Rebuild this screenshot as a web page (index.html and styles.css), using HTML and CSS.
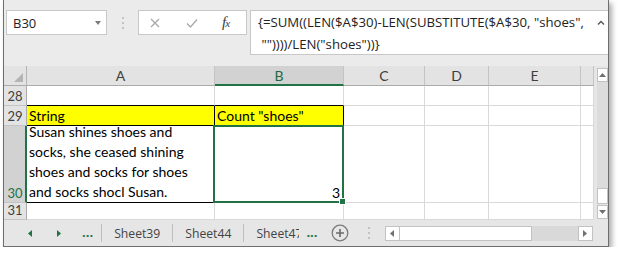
FILE: index.html
```html
<!DOCTYPE html>
<html>
<head>
<meta charset="utf-8">
<link rel="stylesheet" href="styles.css">
</head>
<body>
<div class="window">
  <div class="fbar">
    <div class="namebox"><span class="nb-text">B30</span><span class="dd"></span></div>
    <div class="grip"></div>
    <div class="fnbox">
      <svg class="ic-x" width="10" height="10" viewBox="0 0 10 10"><path d="M1 1L9 9M9 1L1 9" stroke="#a8a8a8" stroke-width="1.3" fill="none"/></svg>
      <svg class="ic-ok" width="12" height="10" viewBox="0 0 12 10"><path d="M1 5.5L4.5 9L11 1.5" stroke="#a8a8a8" stroke-width="1.3" fill="none"/></svg>
      <span class="fx"><i>f</i><i class="fx-x">x</i></span>
    </div>
    <div class="formula">
      <div class="ftext">
        <div class="fline">{=SUM((LEN($A$30)-LEN(SUBSTITUTE($A$30, "shoes",</div>
        <div class="fline"> ""))))/LEN("shoes"))}</div>
      </div>
      <svg class="caret" width="8" height="5" viewBox="0 0 8 5"><path d="M1 4.5L4 1.5L7 4.5" stroke="#555" stroke-width="1.4" fill="none"/></svg>
    </div>
  </div>

  <div class="body">
    <div class="grid">
      <div class="corner"><span class="tri"></span></div>
      <div class="ch">A</div>
      <div class="ch ch-sel">B</div>
      <div class="ch">C</div>
      <div class="ch">D</div>
      <div class="ch">E</div>
      <div class="ch"></div>

      <div class="rh">28</div>
      <div class="c c-topb"></div>
      <div class="c c-topb"></div>
      <div class="c"></div>
      <div class="c"></div>
      <div class="c"></div>
      <div class="c"></div>

      <div class="rh">29</div>
      <div class="c c-yel">String</div>
      <div class="c c-yel">Count "shoes"</div>
      <div class="c"></div>
      <div class="c"></div>
      <div class="c"></div>
      <div class="c"></div>

      <div class="rh rh-sel">30</div>
      <div class="c c-wrap">Susan shines shoes and socks, she ceased shining shoes and socks for shoes and socks shocl Susan.</div>
      <div class="c c-active"><span class="num">3</span><span class="sel"></span><span class="handle"></span></div>
      <div class="c"></div>
      <div class="c"></div>
      <div class="c"></div>
      <div class="c"></div>

      <div class="rh">31</div>
      <div class="c"></div>
      <div class="c"></div>
      <div class="c"></div>
      <div class="c"></div>
      <div class="c"></div>
      <div class="c"></div>
    </div>
    <div class="vscroll">
      <div class="vbtn"><svg width="7" height="4" viewBox="0 0 7 4"><path d="M0 4L3.5 0L7 4Z" fill="#6f6f6f"/></svg></div>
      <div class="vtrack"></div>
      <div class="vthumb"></div>
      <div class="vbtn"><svg width="7" height="4" viewBox="0 0 7 4"><path d="M0 0L3.5 4L7 0Z" fill="#6f6f6f"/></svg></div>
    </div>
  </div>

  <div class="tabs">
    <svg class="t-left" width="4" height="7" viewBox="0 0 4 7"><path d="M4 0L0 3.5L4 7Z" fill="#217346"/></svg>
    <svg class="t-right" width="4" height="7" viewBox="0 0 4 7"><path d="M0 0L4 3.5L0 7Z" fill="#217346"/></svg>
    <span class="t-more">...</span>
    <span class="t-sep"></span>
    <span class="tab">Sheet39</span>
    <span class="t-sep"></span>
    <span class="tab">Sheet44</span>
    <span class="t-sep"></span>
    <span class="tab tab-clip">Sheet47</span>
    <span class="t-more t-more2">...</span>
    <svg class="t-add" width="18" height="18" viewBox="0 0 18 18"><circle cx="9" cy="9" r="7.8" stroke="#7a7a7a" stroke-width="1.3" fill="none"/><path d="M9 5V13M5 9H13" stroke="#6a6a6a" stroke-width="1.6"/></svg>
    <span class="t-grip"></span>
    <div class="hscroll">
      <div class="hbtn"><svg width="4" height="7" viewBox="0 0 4 7"><path d="M4 0L0 3.5L4 7Z" fill="#6f6f6f"/></svg></div>
      <div class="hthumb"></div>
      <div class="htrack"></div>
      <div class="hbtn"><svg width="4" height="7" viewBox="0 0 4 7"><path d="M0 0L4 3.5L0 7Z" fill="#6f6f6f"/></svg></div>
    </div>
  </div>
</div>
</body>
</html>
```
FILE: styles.css
```css
html, body {
  margin: 0;
  padding: 0;
  background: #ffffff;
}

.window {
  margin-left: 3px;
  width: 606px;
  height: 247px;
  box-sizing: border-box;
  border: 1px solid #6e6e6e;
  border-top: none;
  background: #e6e6e6;
  box-shadow: 3px 3px 5px rgba(0, 0, 0, 0.32);
  display: flex;
  flex-direction: column;
  overflow: hidden;
}

/* ---------- formula bar ---------- */
.fbar {
  height: 66px;
  flex: none;
  box-sizing: border-box;
  padding: 10px 0 0 2px;
  display: flex;
  align-items: flex-start;
  background: #ebebeb;
}

.namebox {
  width: 101px;
  height: 25px;
  box-sizing: border-box;
  border: 1px solid #c8c8c8;
  background: #fff;
  display: flex;
  align-items: center;
  padding-left: 6px;
  font: 13px "Open Sans", sans-serif;
  color: #222;
}

.dd {
  margin-left: auto;
  margin-right: 5px;
  width: 0;
  height: 0;
  border-left: 3.5px solid transparent;
  border-right: 3.5px solid transparent;
  border-top: 4px solid #7a7a7a;
}

.grip {
  margin: 7px 0 0 15px;
  width: 2px;
  height: 12px;
  background-image: linear-gradient(#c2c2c2 2px, transparent 2px);
  background-size: 2px 5px;
}

.fnbox {
  margin-left: 14px;
  width: 109px;
  height: 25px;
  box-sizing: border-box;
  border: 1px solid #c8c8c8;
  background: #fff;
  display: flex;
  align-items: center;
  padding-left: 11px;
}

.ic-ok {
  margin-left: 26px;
}

.fx {
  margin-left: 24px;
  font: italic 15px "Liberation Serif", serif;
  color: #3c3c3c;
  letter-spacing: -1px;
}

.fx-x {
  font-size: 11px;
}

.formula {
  margin-left: 3px;
  flex: 1;
  height: 45px;
  box-sizing: border-box;
  border: 1px solid #c8c8c8;
  border-right: none;
  background: #fff;
  display: flex;
  align-items: flex-start;
  padding-left: 7px;
}

.ftext {
  flex: 1;
  font: 13.2px "Open Sans", sans-serif;
  line-height: 22px;
  color: #222;
}

.fline {
  white-space: pre;
}

.caret {
  margin: 9px 3px 0 0;
}

/* ---------- grid ---------- */
.body {
  height: 154px;
  flex: none;
  display: flex;
}

.grid {
  display: grid;
  grid-template-columns: 23px 188px 129px 81px 64px 92px 13px;
  grid-template-rows: 20px 20px 20px 77px 17px;
  background: #fff;
}

.grid > div {
  box-sizing: border-box;
  border-right: 1px solid #d9d9d9;
  border-bottom: 1px solid #d9d9d9;
  min-width: 0;
}

.grid > .corner {
  background: #e3e3e3;
  border-right: 1px solid #b5b5b5;
  border-bottom: 1px solid #ababab;
  display: flex;
  align-items: flex-end;
  justify-content: flex-end;
  padding: 0 3px 3px 0;
}

.tri {
  width: 0;
  height: 0;
  border-left: 9px solid transparent;
  border-bottom: 9px solid #b4b4b4;
}

.grid > .ch {
  background: #e3e3e3;
  border-right: 1px solid #c4c4c4;
  border-bottom: 1px solid #ababab;
  display: flex;
  align-items: center;
  justify-content: center;
  font: 14px "Lato", sans-serif;
  color: #404040;
}

.grid > .ch-sel {
  background: #d2d2d2;
  border-bottom: 2px solid #217346;
  color: #1d6a3f;
}

.grid > .rh {
  background: #e3e3e3;
  border-right: 1px solid #ababab;
  border-bottom: 1px solid #c4c4c4;
  display: flex;
  align-items: flex-end;
  justify-content: center;
  font: 13px "Lato", sans-serif;
  line-height: 17px;
  color: #404040;
}

.grid > .rh-sel {
  background: #d2d2d2;
  border-right: 2px solid #217346;
  color: #217346;
  padding-left: 1px;
}

.grid > .c {
  font: 14px "Lato", sans-serif;
  color: #000;
  line-height: 18px;
  padding: 0 2px 0 2px;
  display: flex;
  align-items: flex-end;
  white-space: nowrap;
}

.grid > .c-topb {
  border-bottom: 1px solid #000;
}

.grid > .c-yel {
  background: #ffff00;
  border-right: 1px solid #000;
  border-bottom: 1px solid #000;
}

.grid > .c-wrap {
  white-space: normal;
  line-height: 20px;
  border-right: 1px solid #000;
  border-bottom: 1px solid #000;
  padding: 0 8px 0 2px;
  display: flex;
  align-items: flex-end;
}

.grid > .c-active {
  position: relative;
  justify-content: flex-end;
  padding-right: 3px;
  overflow: visible;
  z-index: 2;
}

.sel {
  position: absolute;
  left: -2px;
  top: -1px;
  right: -1px;
  bottom: -1px;
  border: 2px solid #217346;
  pointer-events: none;
}

.handle {
  position: absolute;
  right: -2px;
  bottom: -2px;
  width: 5px;
  height: 5px;
  background: #217346;
  box-shadow: 0 0 0 1px #fff;
}

/* vertical scrollbar */
.vscroll {
  width: 14px;
  box-sizing: border-box;
  padding: 2px 0 1px 3px;
  display: flex;
  flex-direction: column;
  background: #e6e6e6;
}

.vbtn {
  width: 11px;
  height: 14px;
  box-sizing: border-box;
  border: 1px solid #c2c2c2;
  background: #fff;
  display: flex;
  align-items: center;
  justify-content: center;
  flex: none;
}

.vtrack {
  flex: 1;
  background: #dcdcdc;
}

.vthumb {
  height: 16px;
  flex: none;
  box-sizing: border-box;
  border: 1px solid #c2c2c2;
  background: #fff;
  margin-bottom: 1px;
}

/* ---------- sheet tabs ---------- */
.tabs {
  flex: 1;
  display: flex;
  align-items: center;
  background: #e6e6e6;
  font: 12.2px "Open Sans", sans-serif;
  color: #444;
}

.t-left {
  margin-left: 24px;
}

.t-right {
  margin-left: 25px;
}

.t-more {
  margin-left: 21px;
  font: bold 13px "Open Sans", sans-serif;
  color: #217346;
  position: relative;
  top: -1px;
}

.t-sep {
  width: 1px;
  height: 18px;
  background: #bdbdbd;
  margin-left: 8px;
}

.tab {
  padding: 0 12px;
  white-space: nowrap;
}

.tab + .t-sep {
  margin-left: 0;
}

.tab-clip {
  width: 43px;
  padding-right: 0;
  overflow: hidden;
  flex: none;
}

.t-more2 {
  margin-left: 7px;
}

.t-add {
  margin-left: 13px;
  flex: none;
}

.t-grip {
  margin-left: 19px;
  width: 2px;
  height: 12px;
  background-image: linear-gradient(#c2c2c2 2px, transparent 2px);
  background-size: 2px 5px;
}

.hscroll {
  margin-left: 15px;
  width: 208px;
  height: 15px;
  display: flex;
}

.hbtn {
  width: 15px;
  height: 15px;
  box-sizing: border-box;
  border: 1px solid #c2c2c2;
  background: #fff;
  display: flex;
  align-items: center;
  justify-content: center;
  flex: none;
}

.hthumb {
  width: 132px;
  box-sizing: border-box;
  border: 1px solid #c2c2c2;
  border-left: none;
  background: #fff;
}

.htrack {
  flex: 1;
  background: #d9d9d9;
}
```
